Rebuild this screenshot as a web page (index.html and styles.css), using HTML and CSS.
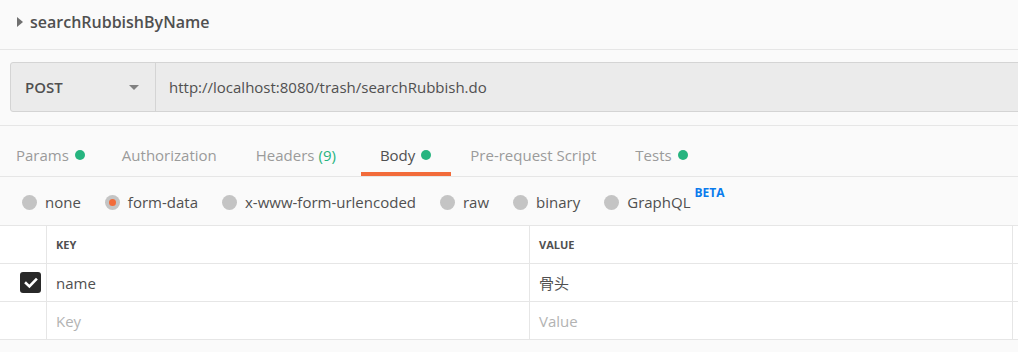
FILE: index.html
```html
<!DOCTYPE html>
<html lang="en">

<head>
    <meta charset="UTF-8">
    <title>searchRubbishByName</title>
    <link rel="stylesheet" href="styles.css">
</head>

<body>
    <div class="title-bar">
        <span class="caret"></span>
        <span class="title">searchRubbishByName</span>
    </div>

    <div class="url-row">
        <div class="url-bar">
            <div class="method">
                <span>POST</span>
                <span class="arrow"></span>
            </div>
            <div class="url">http://localhost:8080/trash/searchRubbish.do</div>
        </div>
    </div>

    <!-- вкладки запроса -->
    <div class="tabs">
        <div class="tab params-tab">Params <span class="dot"></span></div>
        <div class="tab">Authorization</div>
        <div class="tab headers">Headers <span class="count">(9)</span></div>
        <div class="tab active">Body <span class="dot"></span></div>
        <div class="tab">Pre-request Script</div>
        <div class="tab">Tests <span class="dot"></span></div>
    </div>

    <div class="body-types">
        <label class="radio"><span class="circle"></span>none</label>
        <label class="radio"><span class="circle checked"></span>form-data</label>
        <label class="radio"><span class="circle"></span>x-www-form-urlencoded</label>
        <label class="radio"><span class="circle"></span>raw</label>
        <label class="radio"><span class="circle"></span>binary</label>
        <label class="radio"><span class="circle"></span>GraphQL<sup class="beta">BETA</sup></label>
    </div>

    <table class="params">
        <thead>
            <tr>
                <th class="col-check"></th>
                <th class="col-key">KEY</th>
                <th class="col-value">VALUE</th>
                <th class="col-rest"></th>
            </tr>
        </thead>
        <tbody>
            <tr>
                <td class="col-check">
                    <span class="checkbox">
                        <svg width="14" height="12" viewBox="0 0 14 12">
                            <path d="M2 6.2 L5.4 9.4 L12 2.6" fill="none" stroke="#fff" stroke-width="2.6" stroke-linecap="square"/>
                        </svg>
                    </span>
                </td>
                <td>name</td>
                <td class="cjk">骨头</td>
                <td></td>
            </tr>
            <tr>
                <td class="col-check"></td>
                <td class="placeholder">Key</td>
                <td class="placeholder">Value</td>
                <td></td>
            </tr>
        </tbody>
    </table>
</body>

</html>
```

FILE: styles.css
```css
body {
    margin: 0;
    font-family: "Open Sans", "Noto Sans CJK SC", sans-serif;
    background-color: #fafafa;
    color: #505050;
    overflow: hidden;
}

.title-bar {
    height: 44px;
    padding: 0 0 5px 17px;
    display: flex;
    align-items: center;
    border-bottom: 1px solid #e6e6e6;
}

.caret {
    width: 0;
    height: 0;
    border-top: 5px solid transparent;
    border-bottom: 5px solid transparent;
    border-left: 6px solid #707070;
    margin-right: 7px;
}

.title {
    font-size: 16px;
    font-weight: 600;
    color: #505050;
}

.url-row {
    padding: 12px 0 13px 10px;
    border-bottom: 1px solid #e6e6e6;
}

.url-bar {
    display: flex;
    height: 48px;
    width: 1020px;
    border: 1px solid #d4d4d4;
    border-radius: 3px 0 0 3px;
    background-color: #ebebeb;
}

.method {
    display: flex;
    align-items: center;
    justify-content: space-between;
    box-sizing: border-box;
    width: 145px;
    padding: 0 16px 0 14px;
    border-right: 1px solid #d4d4d4;
    font-size: 15px;
    font-weight: 600;
    color: #505050;
}

.arrow {
    width: 0;
    height: 0;
    border-left: 5px solid transparent;
    border-right: 5px solid transparent;
    border-top: 5px solid #808080;
}

.url {
    display: flex;
    align-items: center;
    padding-left: 13px;
    font-size: 15px;
    color: #505050;
}

.tabs {
    display: flex;
    height: 43px;
    padding: 7px 0 0 16px;
    border-bottom: 1px solid #e6e6e6;
}

.tab {
    display: flex;
    align-items: center;
    font-size: 15px;
    color: #9b9b9b;
    margin-right: 39px;
    position: relative;
}

.tab.params-tab {
    margin-right: 37px;
}

.tab.headers {
    margin-right: 44px;
}

.tab.active {
    color: #505050;
}

.tab.active::after {
    content: "";
    position: absolute;
    left: -19px;
    right: -20px;
    bottom: 0;
    height: 4px;
    background-color: #f26b3a;
}

.dot {
    width: 10px;
    height: 10px;
    border-radius: 50%;
    background-color: #26b47f;
    margin-left: 6px;
}

.count {
    color: #26b47f;
    margin-left: 4px;
}

.body-types {
    display: flex;
    align-items: center;
    height: 46px;
    padding: 2px 0 0 22px;
}

.radio {
    display: flex;
    align-items: center;
    font-size: 15px;
    color: #505050;
    margin-right: 24px;
    position: relative;
}

.circle {
    width: 15px;
    height: 15px;
    border-radius: 50%;
    background-color: #c4c4c4;
    margin-right: 8px;
    display: flex;
    align-items: center;
    justify-content: center;
}

.circle.checked::after {
    content: "";
    width: 7px;
    height: 7px;
    border-radius: 50%;
    background-color: #f26b3a;
}

.beta {
    position: relative;
    top: -9px;
    margin-left: 4px;
    font-size: 12px;
    font-weight: 700;
    color: #097bed;
    line-height: 0;
}

.params {
    width: 1040px;
    border-collapse: collapse;
    background-color: #fff;
    table-layout: fixed;
}

.params th,
.params td {
    border: 1px solid #e6e6e6;
    text-align: left;
    padding: 0 0 0 9px;
    font-size: 15px;
    color: #505050;
}

.params th {
    height: 37px;
    font-size: 11px;
    font-weight: 700;
}

.params td {
    height: 37px;
}

.params tr > :first-child {
    border-left: none;
}

.col-check {
    width: 37px;
}

.col-key {
    width: 473px;
}

.col-value {
    width: 473px;
}

.params td.col-check {
    padding: 0 0 0 20px;
    width: 27px;
}

.checkbox {
    display: flex;
    align-items: center;
    justify-content: center;
    width: 21px;
    height: 21px;
    border-radius: 3px;
    background-color: #282828;
}

.params td.placeholder {
    color: #b3b3b3;
}

.cjk {
    font-family: "Noto Sans CJK SC", sans-serif;
    font-size: 14px;
}
```
